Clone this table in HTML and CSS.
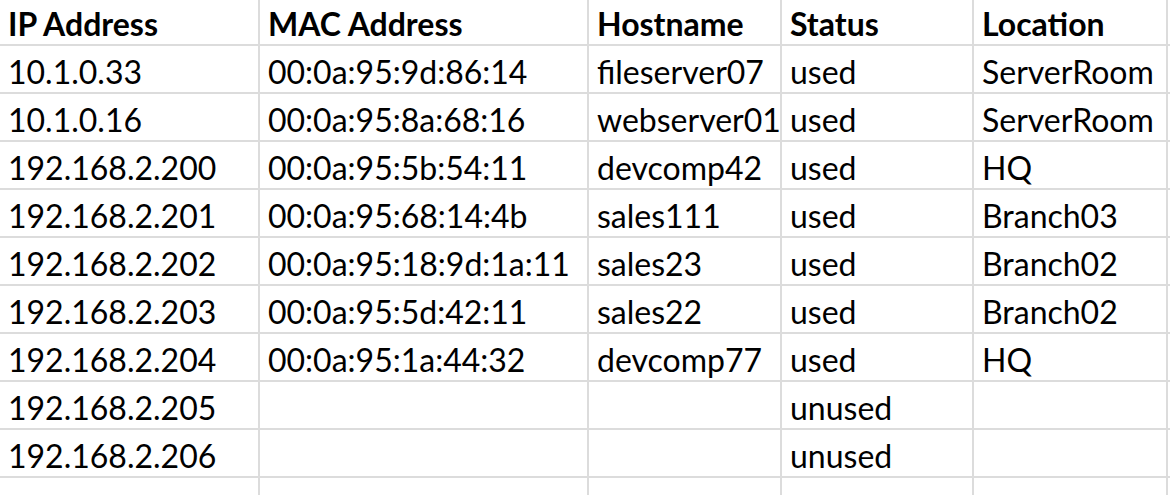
FILE: index.html
```html
<!DOCTYPE html>
<html>
<head>
<meta charset="utf-8">
<link rel="stylesheet" href="styles.css">
</head>
<body>
<div class="sheet">
  <div class="cell head">IP Address</div><div class="cell head">MAC Address</div><div class="cell head">Hostname</div><div class="cell head">Status</div><div class="cell head">Location</div><div class="cell"></div>
  <div class="cell">10.1.0.33</div><div class="cell">00:0a:95:9d:86:14</div><div class="cell">fileserver07</div><div class="cell">used</div><div class="cell">ServerRoom</div><div class="cell"></div>
  <div class="cell">10.1.0.16</div><div class="cell">00:0a:95:8a:68:16</div><div class="cell">webserver01</div><div class="cell">used</div><div class="cell">ServerRoom</div><div class="cell"></div>
  <div class="cell">192.168.2.200</div><div class="cell">00:0a:95:5b:54:11</div><div class="cell">devcomp42</div><div class="cell">used</div><div class="cell">HQ</div><div class="cell"></div>
  <div class="cell">192.168.2.201</div><div class="cell">00:0a:95:68:14:4b</div><div class="cell">sales111</div><div class="cell">used</div><div class="cell">Branch03</div><div class="cell"></div>
  <div class="cell">192.168.2.202</div><div class="cell">00:0a:95:18:9d:1a:11</div><div class="cell">sales23</div><div class="cell">used</div><div class="cell">Branch02</div><div class="cell"></div>
  <div class="cell">192.168.2.203</div><div class="cell">00:0a:95:5d:42:11</div><div class="cell">sales22</div><div class="cell">used</div><div class="cell">Branch02</div><div class="cell"></div>
  <div class="cell">192.168.2.204</div><div class="cell">00:0a:95:1a:44:32</div><div class="cell">devcomp77</div><div class="cell">used</div><div class="cell">HQ</div><div class="cell"></div>
  <div class="cell">192.168.2.205</div><div class="cell"></div><div class="cell"></div><div class="cell">unused</div><div class="cell"></div><div class="cell"></div>
  <div class="cell">192.168.2.206</div><div class="cell"></div><div class="cell"></div><div class="cell">unused</div><div class="cell"></div><div class="cell"></div>
  <div class="cell last"></div><div class="cell last"></div><div class="cell last"></div><div class="cell last"></div><div class="cell last"></div><div class="cell last"></div>
</div>
</body>
</html>
```
FILE: styles.css
```css
html, body {
  margin: 0;
  padding: 0;
  background: #ffffff;
  overflow: hidden;
}

.sheet {
  display: grid;
  grid-template-columns: 260px 329px 193px 192px 194px 1fr;
  grid-template-rows: 46px repeat(9, 48px) 17px;
  font-family: "Lato", "Liberation Sans", sans-serif;
  font-size: 32px;
  color: #000;
}

.cell {
  border-right: 2px solid #dcdcdc;
  border-bottom: 2px solid #dcdcdc;
  padding: 6px 0 0 8px;
  line-height: 40px;
  white-space: nowrap;
  overflow: visible;
}

.head {
  padding-top: 4px;
}

.last {
  border-bottom: none;
  padding: 0;
}

.head {
  font-weight: 700;
}
```
